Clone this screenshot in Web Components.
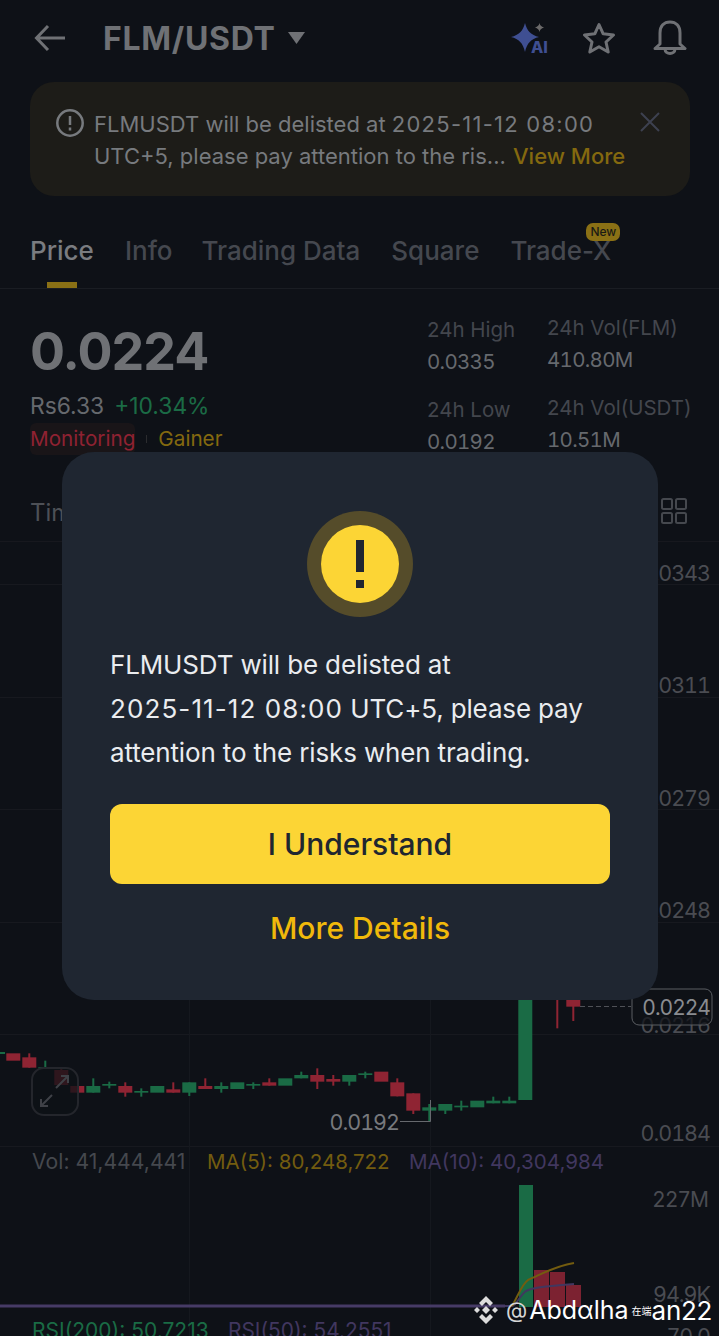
<!DOCTYPE html>
<html>
<head>
<meta charset="utf-8">
<style>
  html, body { margin: 0; height: 100%; background: #0e1117; overflow: hidden; }
  body { font-family: Inter, "Noto Sans", sans-serif; position: relative; }
</style>
</head>
<body>
<market-header pair="FLM/USDT"></market-header>
<delist-notice>FLMUSDT will be delisted at <span class="date">2025-11-12 08:00</span><br>UTC+5, please pay attention to the ris...</delist-notice>
<market-tabs></market-tabs>
<market-stats></market-stats>
<chart-toolbar></chart-toolbar>
<kline-chart></kline-chart>
<delist-dialog>FLMUSDT will be delisted at<br><span class="date">2025-11-12 08:00</span> UTC+5, please pay<br>attention to the risks when trading.</delist-dialog>
<water-mark></water-mark>

<script>
class MarketHeader extends HTMLElement {
  constructor() {
    super()
    this.shadow = this.attachShadow({ mode: 'open' })
  }

  connectedCallback() {
    this.shadow.innerHTML = `
    <style>
      :host { display: flex; align-items: center; height: 76px; padding: 0 32px 0 34px; color: #6f7175; }
      .title { margin-left: 37px; font-size: 32px; font-weight: 700; letter-spacing: 0.7px; }
      .caret { margin-left: 12px; }
      .right { margin-left: auto; display: flex; align-items: center; }
      .star { margin: 0 37px 0 34px; }
      svg { display: block; }
    </style>
    <svg width="32" height="28" viewBox="0 0 32 28" fill="none" stroke="#6f7175" stroke-width="3"><path d="M31 14H3M14 2 2.500 14 14 26"/></svg>
    <span class="title">${this.getAttribute('pair')}</span>
    <svg class="caret" width="17" height="12" viewBox="0 0 17 12"><path d="M0 0h17l-8.500 12z" fill="#6f7175"/></svg>
    <div class="right">
      <svg width="37" height="32" viewBox="0 0 37 32">
        <path d="M14 1c2 8 6 12 14 14-8 2-12 6-14 15-2-9-6-13-14-15 8-2 12-6 14-14z" fill="#3f4f92"/>
        <path d="M28.500 1c.6 2.500 1.700 3.600 4.500 4.500-2.800.9-3.900 2-4.500 4.500-.6-2.500-1.700-3.600-4.500-4.500 2.800-.9 3.900-2 4.500-4.500z" fill="#6b6a6a"/>
        <text x="20" y="31" font-family="Inter, sans-serif" font-size="16" font-weight="800" fill="#3f4f92">AI</text>
      </svg>
      <svg class="star" width="34" height="32" viewBox="0 0 34 32" fill="none" stroke="#6f7175" stroke-width="3" stroke-linejoin="round"><path d="M17 2.500 21.200 11.800 31.500 13 24 20 26.200 30 17 24.800 7.800 30 10 20 2.500 13 12.800 11.800z"/></svg>
      <svg width="34" height="36" viewBox="0 0 34 36" fill="none" stroke="#6f7175" stroke-width="3" stroke-linejoin="round"><path d="M7 24V13C7 6 11 2 17 2s10 4 10 11v11l5 4.500H2z"/><path d="M12 29c0 6 10 6 10 0"/></svg>
    </div>
    `
  }
}

class DelistNotice extends HTMLElement {
  constructor() {
    super()
    this.shadow = this.attachShadow({ mode: 'open' })
  }

  connectedCallback() {
    this.shadow.innerHTML = `
    <style>
      :host { display: flex; box-sizing: border-box; margin: 6px 29px 0 30px; height: 114px; padding: 26px 30px 0 26px; background: #1d1c18; border-radius: 24px; color: #777a7e; font-size: 22px; line-height: 32px; white-space: nowrap; }
      svg { display: block; flex: none; }
      .text { margin-left: 10px; flex: 1; }
      .more { color: #84690f; margin-left: 1px; font-weight: 500; }
      ::slotted(.date) { letter-spacing: 1.25px; }
    </style>
    <svg width="28" height="28" viewBox="0 0 28 28" fill="none" stroke="#777a7e" stroke-width="2.500" style="margin-top:1px"><circle cx="14" cy="14" r="12.700"/><path d="M14 7v9M14 18.500v3"/></svg>
    <div class="text"><slot></slot> <span class="more">View More</span></div>
    <svg width="20" height="20" viewBox="0 0 20 20" stroke="#3d4150" stroke-width="2" style="margin-top:4px"><path d="M1 1l18 18M19 1 1 19"/></svg>
    `
  }
}

class MarketTabs extends HTMLElement {
  constructor() {
    super()
    this.shadow = this.attachShadow({ mode: 'open' })
  }

  connectedCallback() {
    const tabs = ['Price', 'Info', 'Trading Data', 'Square', 'Trade-X']
    this.shadow.innerHTML = `
    <style>
      :host { display: flex; box-sizing: border-box; gap: 31px; height: 93px; padding: 36px 30px 0; border-bottom: 1px solid #1a1d23; color: #45484f; font-size: 26px; line-height: 38px; font-weight: 500; position: relative; }
      .tab { position: relative; }
      .tab:nth-of-type(3) { margin-left: -2px; }
      .on { color: #7a7c80; }
      .on::after { content: ''; position: absolute; left: 17px; width: 30px; height: 6px; top: 50px; background: #8a7015; }
      .new { position: absolute; right: -9px; top: -9px; background: #8a7015; color: #1a1a14; font-size: 12px; line-height: 18px; padding: 0 4px; border-radius: 7px; }
    </style>
    ${tabs.map((t, i) => `<span class="tab ${i === 0 ? 'on' : ''}">${t}${t === 'Trade-X' ? '<span class="new">New</span>' : ''}</span>`).join('')}
    `
  }
}

class MarketStats extends HTMLElement {
  constructor() {
    super()
    this.shadow = this.attachShadow({ mode: 'open' })
  }

  connectedCallback() {
    this.shadow.innerHTML = `
    <style>
      :host { display: flex; box-sizing: border-box; height: 181px; padding-left: 30px; font-size: 20.500px; line-height: 32px; color: #66696e; }
      .left { width: 397px; }
      .price { font-size: 52px; font-weight: 700; line-height: 60px; margin-top: 33px; color: #6f7175; letter-spacing: -1px; }
      .sub { display: flex; gap: 10px; margin-top: 8px; color: #66696e; font-size: 22.800px; }
      .up { color: #1b6b45; }
      .tags { display: flex; align-items: center; margin-top: 1px; font-size: 20.700px; }
      .mon { color: #8f2232; background: #191518; border-radius: 6px; }
      .sep { width: 1px; height: 8px; background: #2b2c2f; margin: 0 11px; }
      .gain { color: #84690f; }
      .col { width: 120px; padding-top: 25px; }
      .col2 { padding-top: 23px; width: 165px; white-space: nowrap; }
      .lab { color: #43464d; }
      .val { font-variant-numeric: tabular-nums; letter-spacing: -0.7px; }
      .val + .lab { margin-top: 16px; }
    </style>
    <div class="left">
      <div class="price">0.0224</div>
      <div class="sub"><span>Rs6.33</span><span class="up">+10.34%</span></div>
      <div class="tags"><span class="mon">Monitoring</span><span class="sep"></span><span class="gain">Gainer</span></div>
    </div>
    <div class="col">
      <div class="lab">24h High</div><div class="val">0.0335</div>
      <div class="lab">24h Low</div><div class="val">0.0192</div>
    </div>
    <div class="col col2">
      <div class="lab">24h Vol(FLM)</div><div class="val">410.80M</div>
      <div class="lab">24h Vol(USDT)</div><div class="val">10.51M</div>
    </div>
    `
  }
}

class ChartToolbar extends HTMLElement {
  constructor() {
    super()
    this.shadow = this.attachShadow({ mode: 'open' })
  }

  connectedCallback() {
    this.shadow.innerHTML = `
    <style>
      :host { display: flex; align-items: center; box-sizing: border-box; height: 72px; padding: 13px 32px 0 30px; justify-content: space-between; border-bottom: 1px solid #17181e; color: #4d5056; font-size: 24px; }
      svg { display: block; margin-bottom: 2px; }
    </style>
    <span>Time</span>
    <svg width="26" height="26" viewBox="0 0 26 26" fill="none" stroke="#45484e" stroke-width="2"><rect x="1" y="1" width="10" height="10" rx="1.500"/><rect x="15" y="1" width="10" height="10" rx="1.500"/><rect x="1" y="15" width="10" height="10" rx="1.500"/><rect x="15" y="15" width="10" height="10" rx="1.500"/></svg>
    `
  }
}

class KlineChart extends HTMLElement {
  constructor() {
    super()
    this.shadow = this.attachShadow({ mode: 'open' })
  }

  candles() {
    // i, colour, body top, body bottom, wick top, wick bottom (y as read off the crop, 3x from y=980)
    const data = [
      [0,'r',220,242],[1,'r',232,263,220,263],[2,'g',262,265,242,265],[3,'r',270,315,265,315],[4,'r',318,338],
      [5,'g',318,338,295,338],[6,'g',312,317,305,325],[7,'r',318,338,307,350],[8,'g',333,338,325,350],[9,'g',318,338],
      [10,'r',328,338,307,338],[11,'g',307,338,307,348],[12,'r',318,327,295,327],[13,'g',318,327,307,338],[14,'g',307,327],
      [15,'g',312,317,307,327],[16,'r',307,317,295,317],[17,'g',295,317],[18,'g',285,295,275,295],[19,'r',285,305,265,327],
      [20,'r',297,305,285,317],[21,'g',285,305,285,317],[22,'g',280,285,275,295],[23,'r',275,305],[24,'r',307,349,295,349],
      [25,'r',340,392,340,402],[26,'g',382,392,372,425],[27,'g',372,392,372,402],[28,'g',377,382,362,392],[29,'g',362,382],
      [30,'g',362,370,350,370],[31,'g',362,370,350,370],[32,'g',-60,360],[34,'r',0,0,0,145],[35,'r',0,80,0,123]
    ]
    const col = { g: '#1a6b45', r: '#8f2433' }
    return data.map(([i, c, t, b, wt, wb]) => {
      const cx = 13.3 + i * 16
      const y = z => 980 + z / 3
      let s = ''
      if (wt !== undefined) s += `<rect x="${cx - 1}" y="${y(wt)}" width="2" height="${(wb - wt) / 3}" fill="${col[c]}"/>`
      if (b > t) s += `<rect x="${cx - 7}" y="${y(t)}" width="14" height="${(b - t) / 3}" fill="${col[c]}"/>`
      return s
    }).join('')
  }

  connectedCallback() {
    const hLines = [584, 697, 809, 922, 1034, 1146]
    const axis = [['0.0343', 573], ['0.0311', 685], ['0.0279', 798], ['0.0248', 910], ['0.0216', 1025], ['0.0184', 1133], ['94.9K', 1294], ['70.0', 1336]]
    this.shadow.innerHTML = `
    <style>
      :host { display: block; height: 794px; overflow: hidden; }
      svg { display: block; font-family: Inter, "Noto Sans", sans-serif; font-size: 22px; }
      .axis { font-variant-numeric: tabular-nums; letter-spacing: -1px; }
    </style>
    <svg width="719" height="794" viewBox="0 542 719 794">
      ${hLines.map(y => `<rect x="0" y="${y}" width="719" height="1" fill="#17191f"/>`).join('')}
      <rect x="189" y="541" width="1" height="795" fill="#15181e"/>
      <rect x="430" y="541" width="1" height="795" fill="#15181e"/>
      ${axis.map(([t, y]) => `<text class="axis" x="710" y="${y + 8}" text-anchor="end" fill="#4a4c52" font-size="21.500">${t}</text>`).join('')}
      <text x="709" y="1207" text-anchor="end" fill="#4a4c52" font-size="21">227M</text>
      ${this.candles()}
      <rect x="0" y="1052" width="5" height="2" fill="#1a6b45"/>
      <rect x="32" y="1068" width="46" height="47" rx="12" fill="#0e1117" fill-opacity=".75" stroke="#24262c" stroke-width="2"/>
      <path d="M56 1088 68 1076M61 1076h7v7M52 1095 41 1106M41 1099v7h7" fill="none" stroke="#3f4147" stroke-width="2"/>
      <path d="M580 1006.500H631" stroke="#4f5157" stroke-dasharray="5 3"/>
      <rect x="632" y="989" width="80" height="36" rx="7" fill="#0e1117" fill-opacity=".7" stroke="#5b5e63"/>
      <text class="axis" x="710" y="1015" text-anchor="end" fill="#8a8c90" font-size="21">0.0224</text>
      <text class="axis" x="399" y="1130" text-anchor="end" fill="#77797d" font-size="21.500">0.0192</text>
      <path d="M400 1121.500H430.500V1100" fill="none" stroke="#66696e"/>
      <text x="32" y="1169" fill="#45484e" font-size="21.200">Vol: 41,444,441</text>
      <text x="207" y="1169" fill="#735c0f" font-size="20.500">MA(5): 80,248,722</text>
      <text x="409" y="1169" fill="#41375f" font-size="20.600">MA(10): 40,304,984</text>
      <rect x="519" y="1185" width="14" height="122" fill="#1a6b45"/>
      <rect x="534" y="1270" width="15" height="37" fill="#7c2231"/>
      <rect x="550" y="1272" width="15" height="35" fill="#7c2231"/>
      <rect x="566" y="1285" width="15" height="22" fill="#7c2231"/>
      <path d="M0 1306H505" stroke="#463b66" stroke-width="3"/>
      <path d="M505 1306H512C516 1306 520 1295 526 1291 534 1287 550 1286 574 1284" fill="none" stroke="#41375f" stroke-width="2"/>
      <path d="M512 1306C518 1296 522 1284 528 1280 540 1275 552 1267 574 1263" fill="none" stroke="#735c0f" stroke-width="2"/>
      <text x="32" y="1338" fill="#1a6b45" font-size="21">RSI(200): 50.7213</text>
      <text x="228" y="1338" fill="#41375f" font-size="20.900">RSI(50): 54.2551</text>
    </svg>
    `
  }
}

class DelistDialog extends HTMLElement {
  constructor() {
    super()
    this.shadow = this.attachShadow({ mode: 'open' })
  }

  connectedCallback() {
    this.shadow.innerHTML = `
    <style>
      :host { position: absolute; left: 62px; top: 452px; width: 596px; height: 548px; box-sizing: border-box; padding: 59px 48px 0; background: #1f2631; border-radius: 32px; color: #eaecef; display: flex; flex-direction: column; }
      .ico { align-self: center; display: block; }
      .msg { margin-top: 26px; font-size: 26px; line-height: 44px; white-space: nowrap; letter-spacing: -0.15px; }
      ::slotted(.date) { letter-spacing: 1.1px; }
      .btn { margin-top: 29px; height: 80px; border-radius: 12px; background: #fcd535; color: #202630; display: flex; align-items: center; justify-content: center; font-size: 30px; font-weight: 500; }
      .link { margin-top: 22px; text-align: center; color: #f0b90b; font-size: 30px; line-height: 44px; font-weight: 500; }
    </style>
    <svg class="ico" width="106" height="106" viewBox="0 0 106 106">
      <circle cx="53" cy="53" r="53" fill="#554c2a"/>
      <circle cx="53" cy="53" r="39" fill="#fcd535"/>
      <rect x="49" y="29" width="8" height="32" fill="#202630"/>
      <rect x="49" y="69" width="8" height="8" fill="#202630"/>
    </svg>
    <div class="msg"><slot></slot></div>
    <div class="btn">I Understand</div>
    <div class="link">More Details</div>
    `
  }
}

class WaterMark extends HTMLElement {
  constructor() {
    super()
    this.shadow = this.attachShadow({ mode: 'open' })
  }

  connectedCallback() {
    this.shadow.innerHTML = `
    <style>
      :host { position: absolute; left: 473px; top: 1296px; display: flex; align-items: center; height: 28px; color: #fff; font-size: 25px; white-space: nowrap; }
      svg { display: block; }
      .at { margin: 0 2px 0 7px; color: #d5d5d5; font-size: 22px; }
      small { font-family: "Noto Sans CJK SC", sans-serif; font-size: 10px; margin: 0 0 0 3px; width: 20px; }
      .end { font-size: 26px; letter-spacing: -0.3px; }
    </style>
    <svg width="26" height="28" viewBox="0 0 26 28" fill="#dcdcdc">
      <path d="M13 0l7 7-3 3-4-4-4 4-3-3zM13 28l7-7-3-3-4 4-4-4-3 3zM1 14l3-3 3 3-3 3zM19 14l3-3 3 3-3 3zM13 10l4 4-4 4-4-4z"/>
    </svg>
    <span class="at">@</span><span>Abdαlha</span><small>在端</small><span class="end">an22</span>
    `
  }
}

customElements.define('market-header', MarketHeader)
customElements.define('delist-notice', DelistNotice)
customElements.define('market-tabs', MarketTabs)
customElements.define('market-stats', MarketStats)
customElements.define('chart-toolbar', ChartToolbar)
customElements.define('kline-chart', KlineChart)
customElements.define('delist-dialog', DelistDialog)
customElements.define('water-mark', WaterMark)
</script>
</body>
</html>
